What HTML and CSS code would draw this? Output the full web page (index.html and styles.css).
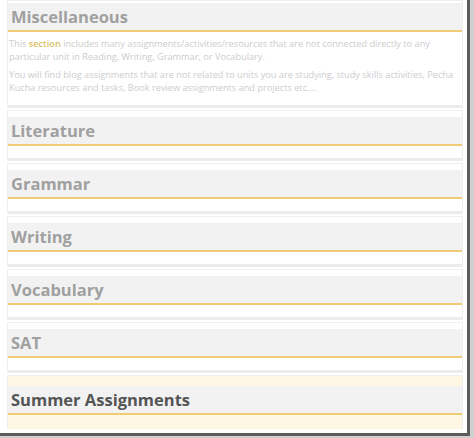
FILE: index.html
```html
<!DOCTYPE html>
<html>
<head>
<meta charset="utf-8">
<link rel="stylesheet" href="styles.css">
</head>
<body>
<div class="frame">
  <div class="section first">
    <div class="section-head">Miscellaneous</div>
    <div class="section-body intro">
      <p>This <span class="hl">section</span> includes many assignments/activities/resources that are not connected directly to any particular unit in Reading, Writing, Grammar, or Vocabulary.</p>
      <p>You will find blog assignments that are not related to units you are studying, study skills activities, Pecha Kucha resources and tasks, Book review assignments and projects etc....</p>
    </div>
  </div>
  <div class="section">
    <div class="section-head">Literature</div>
    <div class="section-body"></div>
  </div>
  <div class="section">
    <div class="section-head">Grammar</div>
    <div class="section-body"></div>
  </div>
  <div class="section">
    <div class="section-head">Writing</div>
    <div class="section-body"></div>
  </div>
  <div class="section">
    <div class="section-head">Vocabulary</div>
    <div class="section-body"></div>
  </div>
  <div class="section">
    <div class="section-head">SAT</div>
    <div class="section-body"></div>
  </div>
  <div class="section current">
    <div class="section-head">Summer Assignments</div>
    <div class="section-body"></div>
  </div>
</div>
</body>
</html>
```
FILE: styles.css
```css
html, body {
  margin: 0;
  padding: 0;
}
body {
  background: #cfcfcf;
  width: 474px;
  height: 438px;
  overflow: hidden;
  font-family: "Open Sans", "Liberation Sans", sans-serif;
}
.frame {
  box-sizing: border-box;
  width: 470px;
  height: 436px;
  background: #fff;
  border-right: 3px solid #5c5c5c;
  border-bottom: 3px solid #5c5c5c;
  padding: 0 4px 0 7px;
  overflow: hidden;
}
.section {
  border: 1px solid #efefef;
  border-bottom: none;
  margin-top: 2px;
  padding-top: 6px;
}
.section.first {
  margin-top: 0;
  padding-top: 2px;
}
.section-head {
  background: #f2f2f2;
  height: 27px;
  line-height: 27px;
  border-bottom: 2px solid #f0cd74;
  padding-left: 3px;
  font-size: 16.5px;
  font-weight: 700;
  color: #a0a0a0;
  white-space: nowrap;
}
.section-body {
  height: 12px;
  border-bottom: 3px solid #ececec;
}
.section-body.intro {
  height: auto;
  padding: 5px 4px 11px 1px;
  font-size: 9.2px;
  line-height: 13px;
  color: #cdcdcd;
}
.intro p {
  margin: 0 0 5px 0;
}
.intro p:last-child {
  margin-bottom: 0;
}
.hl {
  color: #d9c067;
  font-weight: 600;
}
.section.current {
  background: #fdf7e3;
  padding-top: 10px;
}
.section.current .section-head {
  color: #555;
}
.section.current .section-body {
  height: 14px;
  border-bottom: none;
}
```
